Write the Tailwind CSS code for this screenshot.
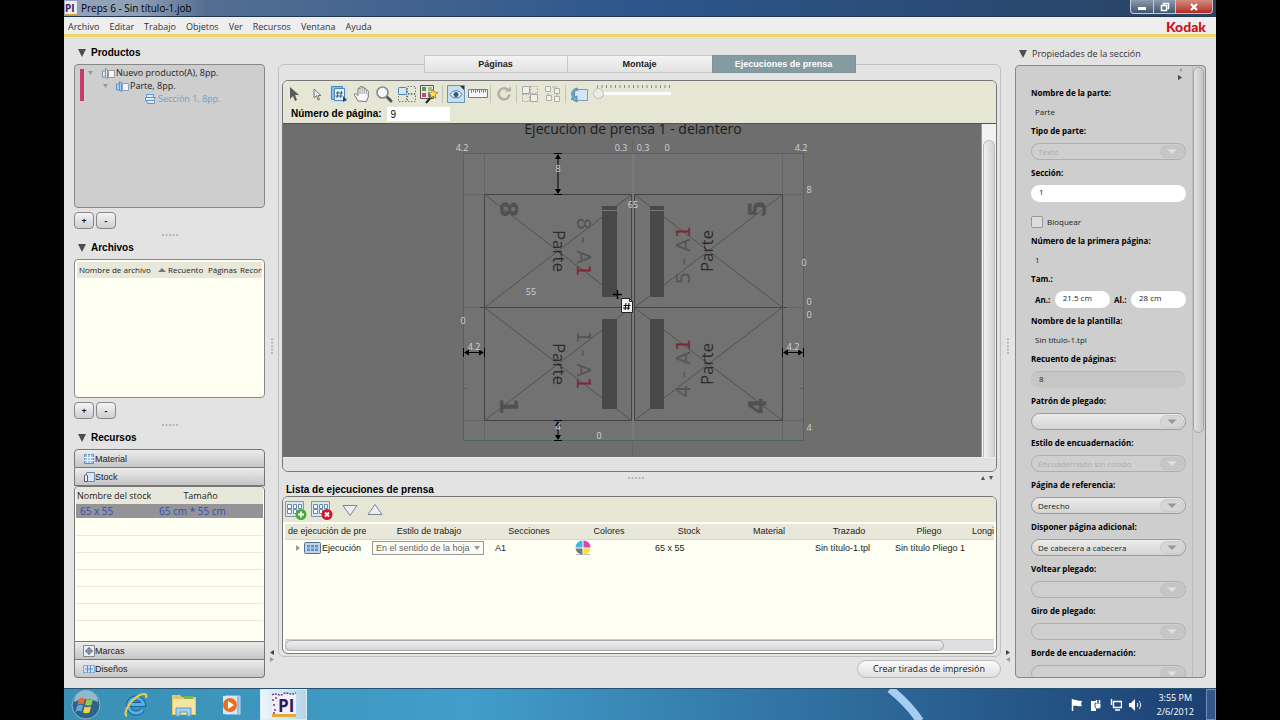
<!DOCTYPE html>
<html lang="es">
<head>
    <meta charset="UTF-8">
    <meta name="viewport" content="width=device-width, initial-scale=1.0">
    <title>Preps 6 - Sin título-1.job</title>
    <script src="https://cdn.jsdelivr.net/npm/@tailwindcss/browser@4"></script>
</head>
<body class="bg-black">
    <!-- Shared icons -->
    <svg class="hidden">
        <symbol id="dots" viewBox="0 0 16 2"><path d="M0 1h2M3.500 1h2M7 1h2M10.500 1h2M14 1h2" stroke="#aaa" stroke-width="1.500"/></symbol>
        <symbol id="dots-v" viewBox="0 0 2 16"><path d="M1 0v2M1 3.500v2M1 7v2M1 10.500v2M1 14v2" stroke="#aaa" stroke-width="1.500"/></symbol>
        <symbol id="down" viewBox="0 0 8 8"><path d="M0 0h8l-4 8z" fill="#4d4d4d"/></symbol>
        <symbol id="arrow-on" viewBox="0 0 24 13">
            <rect x=".5" y=".5" width="23" height="12" rx="6" fill="#d6d6d6" stroke="#c9c9c9"/>
            <path d="M7.500 4.500h9l-4.500 4.500z" fill="#929a9e"/>
        </symbol>
        <symbol id="arrow-off" viewBox="0 0 24 13">
            <rect x=".5" y=".5" width="23" height="12" rx="6" fill="#c6c6c6" stroke="#c2c2c2"/>
            <path d="M7.500 4.500h9l-4.500 4.500z" fill="#e2e2e2"/>
        </symbol>
    </svg>

    <div class="mx-auto flex h-screen w-[90%] flex-col overflow-hidden bg-[#e3e3e3] font-['Open_Sans','Noto_Sans',sans-serif] text-[9px] leading-3 text-[#222]">
        <!-- Title bar -->
        <header class="flex h-[17px] shrink-0 items-center justify-between border-b border-[#20354f] bg-linear-to-r from-[#5f7593] via-[#2d568c] to-[#284263] pr-[3px]">
            <div class="flex h-full items-center gap-1 bg-linear-to-r from-[#91a2b9] via-[#8fa0b8] to-transparent pr-4 pl-px text-[10px] text-black">
                <svg class="h-4 w-3" viewBox="0 0 12 16"><path d="M0 1h12v13H0z" fill="#eceaf4"/><path d="M0 14h12v1H0z" fill="#dca63a"/><text x="0" y="12" font-size="10" font-weight="bold" fill="#33225d">PI</text></svg>
                <h1>Preps 6 - Sin título-1.job</h1>
            </div>
            <div class="flex h-full items-start">
                <button aria-label="Minimizar" class="flex h-[14px] w-6 items-center justify-center rounded-bl-sm border border-t-0 border-[#c4ccd6] bg-linear-to-b from-[#8c9bad] to-[#44566d]">
                    <svg class="h-2 w-3" viewBox="0 0 12 8"><path d="M2 4h8v3H2z" fill="#fff"/></svg>
                </button>
                <button aria-label="Restaurar" class="flex h-[14px] w-[22px] items-center justify-center border border-t-0 border-l-0 border-[#c4ccd6] bg-linear-to-b from-[#8c9bad] to-[#44566d]">
                    <svg class="h-[10px] w-3" viewBox="0 0 12 10"><path d="M4.500 2.500v-1h5v5h-1M2.500 3.500h5v5h-5z" fill="none" stroke="#fff" stroke-width="1.500"/></svg>
                </button>
                <button aria-label="Cerrar" class="flex h-[14px] w-[37px] items-center justify-center rounded-br-sm border border-t-0 border-l-0 border-[#d8b8b8] bg-linear-to-b from-[#d08a80] to-[#b3261f]">
                    <svg class="h-2 w-[10px]" viewBox="0 0 10 8"><path d="M2 1l6 6M8 1L2 7" stroke="#fff" stroke-width="2.200"/></svg>
                </button>
            </div>
        </header>

        <!-- Menu bar -->
        <nav class="flex h-5 shrink-0 items-center justify-between border-b-[3px] border-[#ecd66c] bg-[#eeeeee] pt-[3px] pr-[10px] pl-1">
            <div class="flex gap-[10px] text-[#333]">
                <a href="#archivo">Archivo</a>
                <a href="#editar">Editar</a>
                <a href="#trabajo">Trabajo</a>
                <a href="#objetos">Objetos</a>
                <a href="#ver">Ver</a>
                <a href="#recursos">Recursos</a>
                <a href="#ventana">Ventana</a>
                <a href="#ayuda">Ayuda</a>
            </div>
            <span class="font-[Lato,sans-serif] text-[14px] font-black text-[#c8141c]">Kodak</span>
        </nav>

        <main class="flex min-h-0 flex-1 px-[10px] pt-[5px] pb-[10px]">
            <!-- Left column -->
            <aside class="flex w-[191px] shrink-0 flex-col">
                <h2 class="flex h-[22px] items-center gap-[5px] pl-1 font-['Liberation_Sans',sans-serif] text-[10px] font-bold text-black"><svg class="h-2 w-2"><use href="#down"/></svg>Productos</h2>
                <div class="flex h-36 items-start gap-1 rounded-sm border border-[#888] bg-[#cecece] px-[5px] pt-px">
                    <div class="mt-[3px] h-8 w-1 bg-[#c73a6b]"></div>
                    <ul class="leading-[13px]">
                        <li class="flex items-center gap-1">
                            <svg class="h-1 w-[5px]" viewBox="0 0 5 4"><path d="M0 0h5L2.500 4z" fill="#999"/></svg>
                            <span class="flex items-center gap-px"><svg class="ml-1 h-3 w-[14px]" viewBox="0 0 14 12"><path d="M1.500 4v6h3V4zM4.500 1.500l2 1v9l-2-1z" fill="#e2e8f0" stroke="#8190a5"/><path d="M7.500 3.500h6v7h-6z" fill="#f6f6f6" stroke="#999"/></svg>Nuevo producto(A), 8pp.</span>
                        </li>
                        <li class="flex items-center gap-1 pl-[15px]">
                            <svg class="h-1 w-[5px]" viewBox="0 0 5 4"><path d="M0 0h5L2.500 4z" fill="#999"/></svg>
                            <span class="flex items-center gap-px"><svg class="ml-[3px] h-3 w-[14px]" viewBox="0 0 14 12"><path d="M1.500 4v6h3V4zM4.500 1.500l2 1v9l-2-1z" fill="#a9cdee" stroke="#5f95c8"/><path d="M7.500 3.500h6v7h-6z" fill="#f6f6f6" stroke="#7fa5cb"/></svg>Parte, 8pp.</span>
                        </li>
                        <li class="flex items-center gap-[2px] pl-14 text-[#6d9fd2]">
                            <svg class="h-3 w-3" viewBox="0 0 12 12"><path d="M2.500 1.500h7v3h-7zM1.500 4.500h10l-2 3h-8zM2.500 7.500h8v3h-7z" fill="#dcecfa" stroke="#5f95c8"/></svg>Sección 1, 8pp.
                        </li>
                    </ul>
                </div>
                <div class="mt-1 flex gap-[2px] font-bold">
                    <button aria-label="Añadir producto" class="h-[17px] w-5 rounded-sm border border-[#888] bg-linear-to-b from-[#f4f4f4] to-[#cfcfcf]">+</button>
                    <button aria-label="Quitar producto" class="h-[17px] w-5 rounded-sm border border-[#888] bg-linear-to-b from-[#f4f4f4] to-[#cfcfcf]">-</button>
                </div>
                <div class="flex h-2 items-end justify-center pb-px"><svg class="h-[2px] w-4"><use href="#dots"/></svg></div>

                <h2 class="flex h-[22px] items-center gap-[5px] pl-1 font-['Liberation_Sans',sans-serif] text-[10px] font-bold text-black"><svg class="h-2 w-2"><use href="#down"/></svg>Archivos</h2>
                <div class="h-[139px] overflow-hidden rounded-sm border border-[#888] bg-[#fffff2] p-[2px]">
                    <table class="w-full table-fixed text-left text-[8px]">
                        <thead class="bg-[#e8e8da]">
                            <tr class="h-4 whitespace-nowrap">
                                <th class="w-[91px] pl-[2px] font-normal"><span class="flex items-center gap-[7px]">Nombre de archivo<svg class="h-1 w-2" viewBox="0 0 8 4"><path d="M0 4h8L4 0z" fill="#777"/></svg></span></th>
                                <th class="w-10 font-normal">Recuento</th>
                                <th class="w-8 font-normal">Páginas</th>
                                <th class="font-normal"><div class="overflow-hidden">Recorte</div></th>
                            </tr>
                        </thead>
                    </table>
                </div>
                <div class="mt-1 flex gap-[2px] font-bold">
                    <button aria-label="Añadir archivo" class="h-[17px] w-5 rounded-sm border border-[#888] bg-linear-to-b from-[#f4f4f4] to-[#cfcfcf]">+</button>
                    <button aria-label="Quitar archivo" class="h-[17px] w-5 rounded-sm border border-[#888] bg-linear-to-b from-[#f4f4f4] to-[#cfcfcf]">-</button>
                </div>
                <div class="flex h-2 items-end justify-center pb-px"><svg class="h-[2px] w-4"><use href="#dots"/></svg></div>

                <h2 class="flex h-[22px] items-center gap-[5px] pl-1 font-['Liberation_Sans',sans-serif] text-[10px] font-bold text-black"><svg class="h-2 w-2"><use href="#down"/></svg>Recursos</h2>
                <div class="flex min-h-0 flex-1 flex-col font-['Liberation_Sans',sans-serif]">
                    <button class="flex h-[19px] shrink-0 items-center rounded-t-sm border border-[#777] bg-linear-to-b from-[#ececec] to-[#c6c6c6] px-2 pt-px">
                        <svg class="h-3 w-3" viewBox="0 0 12 12"><path d="M1.500 1.500h9v9h-9z" fill="#9cc5ef" stroke="#5f90c4"/><path d="M1 4.500h10M1 7.500h10M4.500 1v9M7.500 1v9" stroke="#e9f3fd"/></svg>Material
                    </button>
                    <button class="flex h-[18px] shrink-0 items-center border-x border-b border-[#777] bg-linear-to-b from-[#ececec] to-[#c6c6c6] px-2">
                        <svg class="h-3 w-3" viewBox="0 0 12 12"><path d="M3.500 1.500h8v9h-8z" fill="#d9e7f6" stroke="#6f8bb0"/><path d="M1.500 4.500c0-1 3-1 3 0v6h-3z" fill="#f4f4f4" stroke="#556"/></svg>Stock
                    </button>
                    <div class="min-h-0 flex-1 overflow-hidden rounded-t-sm border border-[#777] bg-[#fffff2] px-px">
                        <table class="w-full font-['Open_Sans','Noto_Sans',sans-serif]">
                            <thead class="bg-[#e8e8da]">
                                <tr class="h-[17px]"><th class="w-[82px] pl-px text-left font-normal whitespace-nowrap">Nombre del stock</th><th class="pr-5 font-normal">Tamaño</th></tr>
                            </thead>
                            <tbody>
                                <tr class="h-[14px] bg-[#939398] text-[10px] font-medium text-[#2e50b0]"><td class="pl-1">65 x 55</td><td class="pl-px">65 cm * 55 cm</td></tr>
                                <tr class="h-[17px] border-b border-[#e8e8e4]"><td colspan="2"></td></tr>
                                <tr class="h-[17px] border-b border-[#e8e8e4]"><td colspan="2"></td></tr>
                                <tr class="h-[17px] border-b border-[#e8e8e4]"><td colspan="2"></td></tr>
                                <tr class="h-[17px] border-b border-[#e8e8e4]"><td colspan="2"></td></tr>
                                <tr class="h-[17px] border-b border-[#e8e8e4]"><td colspan="2"></td></tr>
                                <tr class="h-[17px] border-b border-[#e8e8e4]"><td colspan="2"></td></tr>
                            </tbody>
                        </table>
                    </div>
                    <button class="flex h-[18px] shrink-0 items-center border-x border-b border-[#777] bg-linear-to-b from-[#ececec] to-[#c6c6c6] px-2">
                        <svg class="h-3 w-3" viewBox="0 0 12 12"><path d="M.5.500h11v11H.5z" fill="#e8eef6" stroke="#888"/><path d="M6 2v8M2 6h8" stroke="#567"/><circle cx="6" cy="6" r="2.500" fill="none" stroke="#567"/></svg>Marcas
                    </button>
                    <button class="flex h-[18px] shrink-0 items-center rounded-b-sm border-x border-b border-[#777] bg-linear-to-b from-[#ececec] to-[#c6c6c6] px-2">
                        <svg class="h-3 w-3" viewBox="0 0 12 12"><path d="M.5 2.500h11v7H.5z" fill="#cfe2f6" stroke="#5f90c4" stroke-dasharray="2 1"/><path d="M2 6h8M4.500 3v6M7.500 3v6" stroke="#5f90c4"/></svg>Diseños
                    </button>
                </div>
            </aside>

            <!-- Left splitter -->
            <div class="flex w-[13px] shrink-0 flex-col items-center justify-between">
                <span></span>
                <svg class="h-4 w-[2px]"><use href="#dots-v"/></svg>
                <svg class="mb-4 h-3 w-1" viewBox="0 0 4 12"><path d="M4 0v5L0 2.500z" fill="#444"/><path d="M0 7v5l4-2.500z" fill="#999"/></svg>
            </div>

            <!-- Work area -->
            <section class="flex min-w-0 flex-1 flex-col pt-[13px]">
                <div class="z-10 -mb-[9px] flex justify-center font-['Liberation_Sans',sans-serif] text-[9px] font-bold" role="tablist">
                    <button role="tab" class="h-[18px] w-36 border border-[#c8c8c8] bg-linear-to-b from-[#f4f4f4] to-[#e2e2e2]">Páginas</button>
                    <button role="tab" class="h-[18px] w-36 border-y border-[#c8c8c8] bg-linear-to-b from-[#f4f4f4] to-[#e2e2e2]">Montaje</button>
                    <button role="tab" aria-selected="true" class="h-[18px] w-36 border border-[#7f959b] bg-[#849ba2] text-white">Ejecuciones de prensa</button>
                </div>
                <div class="flex min-h-0 flex-1 flex-col rounded-md border border-[#c0c0c0] px-[3px] pt-[15px] pb-[2px]">
                    <div class="flex min-h-0 flex-1 flex-col overflow-hidden rounded-md border border-[#777] bg-[#e2e2e2]">
                        <!-- Toolbar -->
                        <div class="h-[43px] shrink-0 border-b border-[#555] bg-[#e5e6d4]">
                            <div class="flex h-[26px] items-center">
                                <button aria-label="Seleccionar" class="flex w-[22px] justify-center"><svg class="h-4 w-4" viewBox="0 0 16 16"><path d="M4 1v12l3-3 2 5 2-1-2-5h4z" fill="#555a60"/></svg></button>
                                <button aria-label="Selección directa" class="flex w-[23px] justify-center"><svg class="h-4 w-4" viewBox="0 0 16 16"><path d="M5 3v9l2.500-2.500L9 14l1.500-.500L9 9.500h3z" fill="#eee" stroke="#777"/></svg></button>
                                <button aria-label="Numerar páginas" class="flex w-[22px] justify-center"><svg class="h-[18px] w-[18px]" viewBox="0 0 18 18"><path d="M0 0h18v18H0z" fill="#d3e3ed"/><path d="M1.500 1.500h11v13h-11z" fill="#8dbce0" stroke="#4e88b5"/><path d="M4.500 3.500h10v12h-10z" fill="#e7f2fa" stroke="#4e88b5"/><path d="M8 6l-1 7M11.500 6l-1 7M6 8h7M5.500 11h7" stroke="#2d5f88"/><path d="M13 11v6l4-2z" fill="#39424a"/></svg></button>
                                <button aria-label="Mano" class="flex w-[23px] justify-center"><svg class="h-[18px] w-[18px]" viewBox="0 0 18 18"><path d="M5 16L1.500 10c-.5-1.500 1-2 2-1l1.500 1.500V4c0-1.500 2-1.500 2 0V2.500c0-1.500 2.200-1.500 2.200 0V3c0-1.500 2.100-1.500 2.100 0v1.500c0-1.300 2-1.300 2 0V6c.5-1 2-.8 2 .500V12l-2 4.500z" fill="#f8f8f8" stroke="#777"/><path d="M7 4v5M9.200 3v6M11.300 4.500V9M13.300 6v3.500" stroke="#888" stroke-width=".8"/></svg></button>
                                <button aria-label="Zoom" class="flex w-[22px] justify-center"><svg class="h-[18px] w-[18px]" viewBox="0 0 18 18"><path d="M11 11l5 5" stroke="#555" stroke-width="3" stroke-linecap="round"/><circle cx="7.500" cy="7.500" r="5.500" fill="#f1f6fa" stroke="#8a8a8a" stroke-width="1.600"/></svg></button>
                                <button aria-label="Organizar páginas" class="flex w-[23px] justify-center"><svg class="h-[18px] w-5" viewBox="0 0 20 18"><path d="M10.500 1.500h8v7h-8zM1.500 9.500h8v7h-8zM10.500 9.500h8v7h-8z" fill="none" stroke="#777" stroke-dasharray="1.500 1.500"/><rect x="1.500" y="2.500" width="8" height="7" rx="1" fill="#d2e7f7" stroke="#4784b8"/></svg></button>
                                <button aria-label="Imposición automática" class="flex w-[22px] justify-center"><svg class="h-5 w-5" viewBox="0 0 20 20"><path d="M1.500 1.500h13v13h-13z" fill="#e9e4ee" stroke="#555"/><path d="M3 3h4v4H3z" fill="#55a04b"/><path d="M9 3h4v4H9z" fill="#9ac470"/><path d="M3 9h4v4H3z" fill="#cc4472"/><path d="M9 9h4v4H9z" fill="#7f69b5"/><path d="M7 19l6-7" stroke="#222" stroke-width="2"/><path d="M14 5l1.300 3.200 3.700.3-2.800 2.300.8 3.500-3-2-3 2 .8-3.500L9 8.500l3.700-.3z" fill="#ffe24a" stroke="#8a7513" stroke-width=".7"/></svg></button>
                                <span class="mx-[2px] h-[18px] w-px bg-[#c4c5b4]"></span>
                                <button aria-label="Vista previa" class="flex w-[22px] justify-center"><svg class="h-[18px] w-[18px]" viewBox="0 0 18 18"><path d="M.5.500h17v17H.5z" fill="#c6dff1" stroke="#6f92ad"/><path d="M13 1h4v4z" fill="#333"/><path d="M3 9.500c3-5 9-5 12 0-3 4.500-9 4.500-12 0z" fill="#eef6fc" stroke="#4a7599"/><circle cx="9" cy="9.500" r="2.500" fill="#2d5f88"/></svg></button>
                                <button aria-label="Medir" class="flex w-[22px] justify-center"><svg class="h-3 w-5" viewBox="0 0 20 12"><path d="M.5 1.500h19v8H.5z" fill="#f5f8fb" stroke="#6f7f92"/><path d="M3.500 2v3M5.500 2v2M7.500 2v3M9.500 2v2M11.500 2v3M13.500 2v2M15.500 2v3M17.500 2v2" stroke="#56657a" stroke-width=".8"/></svg></button>
                                <span class="mx-px h-[18px] w-px bg-[#c4c5b4]"></span>
                                <button aria-label="Girar" disabled class="flex w-[23px] justify-center"><svg class="h-4 w-4" viewBox="0 0 16 16"><path d="M11.500 3.500a5.500 5.500 0 1 0 2 5" fill="none" stroke="#b0b0a8" stroke-width="2.500"/><path d="M9 5.500h6v-5z" fill="#b0b0a8"/></svg></button>
                                <span class="mx-px h-[18px] w-px bg-[#c4c5b4]"></span>
                                <button aria-label="Agrupar" disabled class="flex w-[23px] justify-center"><svg class="h-[18px] w-[18px]" viewBox="0 0 18 18"><path d="M1.500 1.500h7v7h-7zM9.500 9.500h7v7h-7z" fill="#f0f0ea" stroke="#a5a59d"/><path d="M9.500 1.500h7v7h-7zM1.500 9.500h7v7h-7z" fill="none" stroke="#a5a59d" stroke-dasharray="1.500 1.500"/></svg></button>
                                <button aria-label="Desagrupar" disabled class="flex w-[23px] justify-center"><svg class="h-[18px] w-[18px]" viewBox="0 0 18 18"><path d="M1.500 1.500h5v5h-5zM10.500 3.500h5v5h-5zM2.500 10.500h5v5h-5zM10.500 11.500h5v5h-5z" fill="#f0f0ea" stroke="#aeaea6"/><path d="M8 2h5M4 8v2M13 9v2" stroke="#aeaea6"/></svg></button>
                                <span class="mx-px h-[18px] w-px bg-[#c4c5b4]"></span>
                                <button aria-label="Restablecer vista" class="flex w-[23px] justify-center"><svg class="h-[18px] w-5" viewBox="0 0 20 18"><path d="M5.500 4.500h13v11h-13z" fill="#d3e6f5" stroke="#7b9cba"/><path d="M8 3C3 4 1 9 4 13l-2 1 6 3V11l-2 1C4 9 5 6 9 5z" fill="#78a8d4" stroke="#3f72a2" stroke-width=".7"/></svg></button>
                                <div class="flex flex-col pb-1 pl-[3px]">
                                    <svg class="ml-1 h-[3px] w-[73px]" viewBox="0 0 73 3"><path d="M0 1.500h73" stroke="#8b8c80" stroke-width="3" stroke-dasharray="1 3.500"/></svg>
                                    <input type="range" value="0" aria-label="Escala de vista" class="h-[11px] w-[78px] appearance-none bg-transparent [&::-webkit-slider-runnable-track]:h-[3px] [&::-webkit-slider-runnable-track]:bg-white [&::-webkit-slider-thumb]:-mt-1 [&::-webkit-slider-thumb]:h-[11px] [&::-webkit-slider-thumb]:w-[11px] [&::-webkit-slider-thumb]:appearance-none [&::-webkit-slider-thumb]:rounded-full [&::-webkit-slider-thumb]:border [&::-webkit-slider-thumb]:border-[#bbb] [&::-webkit-slider-thumb]:bg-[#ecece4]">
                                </div>
                            </div>
                            <div class="flex h-[14px] items-center gap-[5px] pl-2 font-['Liberation_Sans',sans-serif] text-[10px] text-black">
                                <label for="numPagina" class="font-bold">Número de página:</label>
                                <input id="numPagina" type="text" value="9" class="h-[14px] w-[63px] bg-white pl-1">
                            </div>
                        </div>

                        <!-- Press sheet -->
                        <div class="flex min-h-0 flex-1">
                            <div class="flex min-w-0 flex-1 justify-center overflow-hidden bg-[#6e6e6e]">
                                <svg class="h-[333px] w-[699px] shrink-0" viewBox="283 124 699 333" font-size="9" fill="#d4d4d4" text-anchor="middle">
                                    <rect x="463.500" y="153.500" width="340" height="287" fill="#727272" stroke="#4b6560"/>
                                    <g fill="none" stroke="#646464">
                                        <path d="M484.500 154v286M782.500 154v286M464 194.500h339M464 420.500h339M464 307.500h339M632.500 140v317"/>
                                        <path d="M463 388.500h4M800 388.500h4" stroke="#4b6560"/>
                                    </g>
                                    <g fill="none" stroke="#444">
                                        <path d="M484.500 194.500h147v226h-147zM634.500 194.500h148v226h-148zM480 307.500h307"/>
                                        <path d="M484.500 194.500l147 113-147 113M631.500 194.500l-147 113 147 113M634.500 194.500l148 113-148 113M782.500 194.500l-148 113 148 113" stroke="#535353"/>
                                    </g>
                                    <path d="M633 154v286" stroke="#8a8a8a"/>
                                    <path d="M602 206h15v91h-15zM650 206h14v91h-14zM602 319h15v90h-15zM650 319h14v90h-14z" fill="#484848"/>
                                    <path d="M602 210.500h15M650 210.500h14" stroke="#777"/>
                                    <text x="633" y="134" font-size="14" fill="#1c1c1c">Ejecución de prensa 1 - delantero</text>

                                    <g class="font-['DejaVu_Sans',sans-serif]">
                                        <g font-size="24" font-weight="bold" fill="#515151">
                                            <text transform="translate(500 209) rotate(90)">8</text>
                                            <text transform="translate(766 209) rotate(-90)">5</text>
                                            <text transform="translate(500 406) rotate(90)">1</text>
                                            <text transform="translate(766 406) rotate(-90)">4</text>
                                        </g>
                                        <g font-size="20" fill="#555">
                                            <text transform="translate(577 247) rotate(90)">8 - A<tspan fill="#7c2936">1</tspan></text>
                                            <text transform="translate(690 255) rotate(-90)">5 - A<tspan fill="#7c2936">1</tspan></text>
                                            <text transform="translate(577 360) rotate(90)">1 - A<tspan fill="#7c2936">1</tspan></text>
                                            <text transform="translate(690 368) rotate(-90)">4 - A<tspan fill="#7c2936">1</tspan></text>
                                        </g>
                                    </g>
                                    <g font-size="17" fill="#2c2c2c">
                                        <text transform="translate(553 251) rotate(90)">Parte</text>
                                        <text transform="translate(713 251) rotate(-90)">Parte</text>
                                        <text transform="translate(553 364) rotate(90)">Parte</text>
                                        <text transform="translate(713 364) rotate(-90)">Parte</text>
                                    </g>

                                    <!-- Dimension arrows -->
                                    <path d="M554 153.500h8M554 194.500h8M558 155v38M554 420.500h8M554 440.500h8M558 422v17M463.500 348v9M484.500 348v9M465 352.500h18M782.500 348v9M803.500 348v9M784 352.500h18" stroke="#000"/>
                                    <path d="M558 154l3 5h-6zM558 194l3-5h-6zM558 421l3 5h-6zM558 440l3-5h-6zM464 352.500l5-3v6zM484 352.500l-5-3v6zM783 352.500l5-3v6zM803 352.500l-5-3v6z" fill="#000"/>

                                    <text x="462" y="151">4.2</text><text x="621" y="151">0.3</text><text x="643" y="151">0.3</text><text x="667" y="151">0</text><text x="801" y="151">4.2</text>
                                    <text x="558" y="172">8</text><text x="633" y="208">65</text><text x="531" y="295">55</text><text x="809" y="193">8</text><text x="804" y="266">0</text>
                                    <text x="809" y="305">0</text><text x="809" y="318">0</text><text x="463" y="324">0</text><text x="474" y="350">4.2</text><text x="793" y="350">4.2</text>
                                    <text x="558" y="430">4</text><text x="599" y="439">0</text><text x="809" y="431">4</text>

                                    <!-- Cursor -->
                                    <path d="M613 294.500h9M617.500 290v9" stroke="#000" stroke-width="1.500"/>
                                    <path d="M621.500 298.500h8l3 3v11h-11z" fill="#f4f4f4" stroke="#222"/><path d="M629.500 298.500v3h3" fill="none" stroke="#222"/>
                                    <path d="M626 303l-1 7M629 303l-1 7M623.500 305.500h7M623 308h7" stroke="#000"/>
                                </svg>
                            </div>
                            <div class="w-[15px] shrink-0 border-l border-[#999] bg-[#f2f2f2] pt-4"><div class="mx-px h-full rounded-t-full border border-b-0 border-[#bbb] bg-linear-to-r from-[#f0f0f0] to-[#d2d2d2]"></div></div>
                        </div>
                        <div class="h-[14px] shrink-0 border-t border-[#ececec] bg-[#e2e2e2]"></div>
                    </div>

                    <div class="flex h-3 shrink-0 items-center justify-between px-1">
                        <span class="w-1"></span>
                        <svg class="h-[2px] w-4"><use href="#dots"/></svg>
                        <svg class="h-1 w-3" viewBox="0 0 12 4"><path d="M0 4h4L2 0zM8 0h4l-2 4z" fill="#555"/></svg>
                    </div>

                    <!-- Press run list -->
                    <h2 class="h-3 shrink-0 pl-1 font-['Liberation_Sans',sans-serif] text-[10px] font-bold text-black">Lista de ejecuciones de prensa</h2>
                    <div class="flex h-[158px] shrink-0 flex-col overflow-hidden rounded-md border border-[#777] bg-[#fffff4] px-[2px] font-['Liberation_Sans',sans-serif] text-[9px]">
                        <div class="-mx-[2px] flex h-[25px] shrink-0 items-center gap-1 bg-[#e5e6d4] px-[2px] pt-px">
                            <button aria-label="Añadir ejecución"><svg class="h-[22px] w-[22px]" viewBox="0 0 22 22"><path d="M.5 2.500h18v15H.5z" fill="#dbe7f3" stroke="#7e95ae"/><path d="M2.500 5.500h4v4h-4zM2.500 10.500h4v4h-4zM8.500 5.500h3v4h-3zM8.500 10.500h3v4h-3zM13.500 5.500h3v4h-3z" fill="#fff" stroke="#6688ac"/><circle cx="16" cy="15.500" r="5.500" fill="#46ad35"/><path d="M16 12.500v6M13 15.500h6" stroke="#fff" stroke-width="1.800"/></svg></button>
                            <button aria-label="Eliminar ejecución"><svg class="h-[22px] w-[22px]" viewBox="0 0 22 22"><path d="M.5 2.500h18v15H.5z" fill="#dbe7f3" stroke="#7e95ae"/><path d="M2.500 5.500h4v4h-4zM2.500 10.500h4v4h-4zM8.500 5.500h3v4h-3zM8.500 10.500h3v4h-3zM13.500 5.500h3v4h-3z" fill="#fff" stroke="#6688ac"/><circle cx="16" cy="15.500" r="5.500" fill="#d01a2a"/><path d="M14 13.500l4 4M18 13.500l-4 4" stroke="#fff" stroke-width="1.800"/></svg></button>
                            <button aria-label="Bajar" class="ml-[5px]"><svg class="h-3 w-4" viewBox="0 0 16 12"><path d="M1 1.500h14l-7 10z" fill="#e9eef8" stroke="#7c8596"/></svg></button>
                            <button aria-label="Subir" class="ml-[5px]"><svg class="h-3 w-4" viewBox="0 0 16 12"><path d="M1 10.500h14l-7-10z" fill="#e9eef8" stroke="#7c8596"/></svg></button>
                        </div>
                        <div class="min-h-0 flex-1 overflow-hidden pt-[2px]">
                            <table class="w-full table-fixed text-[#222]">
                                <thead class="bg-[#e8e8da]">
                                    <tr class="h-[15px] border-b border-[#d6d6c8] whitespace-nowrap">
                                        <th class="w-[84px] px-[3px] text-left font-normal"><div class="overflow-hidden">de ejecución de prensa</div></th>
                                        <th class="w-[120px] font-normal">Estilo de trabajo</th>
                                        <th class="w-20 font-normal">Secciones</th>
                                        <th class="w-20 font-normal">Colores</th>
                                        <th class="w-20 font-normal">Stock</th>
                                        <th class="w-20 font-normal">Material</th>
                                        <th class="w-20 font-normal">Trazado</th>
                                        <th class="w-20 font-normal">Pliego</th>
                                        <th class="pl-[3px] text-left font-normal"><div class="overflow-hidden">Longitud</div></th>
                                    </tr>
                                </thead>
                                <tbody>
                                    <tr class="h-[18px] whitespace-nowrap">
                                        <td>
                                            <div class="flex items-center pl-[11px]">
                                                <svg class="h-[6px] w-1" viewBox="0 0 4 6"><path d="M0 0v6l4-3z" fill="#999"/></svg>
                                                <svg class="ml-1 h-3 w-[17px]" viewBox="0 0 17 12"><rect x=".5" y=".5" width="16" height="11" rx="1" fill="#c2d4ea" stroke="#58708e"/><path d="M3 3h3v2.500H3zM7 3h3v2.500H7zM11 3h3v2.500h-3zM3 6.500h3V9H3zM7 6.500h3V9H7zM11 6.500h3V9h-3z" fill="#5d92d2"/></svg>
                                                <span class="pl-px">Ejecución</span>
                                            </div>
                                        </td>
                                        <td class="px-[3px]">
                                            <div class="relative w-[112px]">
                                                <select aria-label="Estilo de trabajo" class="block h-[14px] w-full appearance-none border border-[#999] bg-[#fbfbf6] pl-[3px] text-[9px] leading-3 text-[#666]"><option>En el sentido de la hoja</option></select>
                                                <svg class="pointer-events-none absolute top-[5px] right-1 h-1 w-[6px]" viewBox="0 0 6 4"><path d="M0 0h6L3 4z" fill="#999"/></svg>
                                            </div>
                                        </td>
                                        <td class="pl-[6px]">A1</td>
                                        <td class="pl-[6px]"><svg class="h-4 w-4" viewBox="0 0 16 16"><path d="M1 14.500h14" stroke="#bbb"/><path d="M7.500 7.500V.5a7 7 0 0 0-7 7z" fill="#45b7e4"/><path d="M8.500 7.500h7a7 7 0 0 0-7-7z" fill="#e53fb0"/><path d="M8.500 8.500v6a7 7 0 0 0 7-6z" fill="#f2e427"/><path d="M7.500 8.500h-7a7 7 0 0 0 7 6z" fill="#727b80"/></svg></td>
                                        <td class="pl-[6px]">65 x 55</td>
                                        <td></td>
                                        <td class="pl-[6px]">Sin título-1.tpl</td>
                                        <td class="pl-[6px]">Sin título Pliego 1</td>
                                        <td></td>
                                    </tr>
                                </tbody>
                            </table>
                        </div>
                        <div class="mb-[2px] h-3 shrink-0 border-t border-[#ccc] bg-[#dedede]">
                            <div class="h-full w-[93%] rounded-full border border-[#aaa] bg-linear-to-b from-[#efefef] to-[#d5d5d5]"></div>
                        </div>
                    </div>
                </div>
                <div class="flex justify-end pt-[3px]">
                    <button class="h-[18px] rounded-full border border-[#bbb] bg-linear-to-b from-[#fafafa] to-[#e0e0e0] px-[15px]">Crear tiradas de impresión</button>
                </div>
            </section>

            <!-- Right splitter -->
            <div class="flex w-[14px] shrink-0 flex-col items-center justify-between">
                <span></span>
                <svg class="h-4 w-[2px]"><use href="#dots-v"/></svg>
                <svg class="mb-4 h-3 w-1" viewBox="0 0 4 12"><path d="M0 0v5l4-2.500z" fill="#444"/><path d="M4 7v5L0 9.500z" fill="#999"/></svg>
            </div>

            <!-- Section properties -->
            <aside class="flex w-[191px] shrink-0 flex-col">
                <h2 class="flex h-[23px] items-center gap-[5px] pl-1 text-[#333]"><svg class="h-2 w-2"><use href="#down"/></svg>Propiedades de la sección</h2>
                <div class="flex min-h-0 flex-1 overflow-hidden rounded-sm border border-[#888] bg-[#cecece] text-[8px]">
                    <div class="flex min-w-0 flex-1 flex-col pl-[15px]">
                        <svg class="mt-[2px] mr-[10px] h-3 w-1 shrink-0 self-end" viewBox="0 0 4 12"><path d="M4 0v4L1 2z" fill="#999"/><path d="M0 7v5l4-2.500z" fill="#444"/></svg>
                        <div class="flex w-[155px] shrink-0 flex-col">
                            <h3 class="mt-1 flex h-[18px] items-center font-bold text-black">Nombre de la parte:</h3>
                            <p class="flex h-5 items-center pl-1">Parte</p>
                            <label for="tipo" class="flex h-[21px] items-center pb-1 font-bold text-black">Tipo de parte:</label>
                            <div class="relative mb-1">
                                <select id="tipo" disabled class="block h-[17px] w-full appearance-none rounded-full border border-[#adadad] bg-[#cfcfcf] px-[6px] text-[#adadad] opacity-100"><option>Texto</option></select>
                                <svg class="pointer-events-none absolute top-[2px] right-[2px] h-[13px] w-6"><use href="#arrow-off"/></svg>
                            </div>
                            <label for="seccion" class="flex h-[21px] items-center pb-1 font-bold text-black">Sección:</label>
                            <input id="seccion" type="text" value="1" class="mb-1 h-[17px] w-full rounded-full bg-white px-2 pb-1">
                            <label class="mt-[6px] flex h-5 items-center gap-1">
                                <input type="checkbox" class="h-3 w-3 appearance-none rounded-xs border border-[#999] bg-[#dcdcdc]">Bloquear
                            </label>
                            <h3 class="flex h-[18px] items-center font-bold text-black">Número de la primera página:</h3>
                            <p class="flex h-5 items-center pl-1">1</p>
                            <h3 class="flex h-[18px] items-center font-bold text-black">Tam.:</h3>
                            <div class="mt-[3px] mb-1 flex items-center justify-between pl-1">
                                <label for="ancho" class="font-bold text-black">An.:</label>
                                <input id="ancho" type="text" value="21.5 cm" class="h-[17px] w-[55px] rounded-full bg-white px-2 pb-1">
                                <label for="alto" class="font-bold text-black">Al.:</label>
                                <input id="alto" type="text" value="28 cm" class="h-[17px] w-[55px] rounded-full bg-white px-2 pb-1">
                            </div>
                            <h3 class="flex h-[18px] items-center font-bold text-black">Nombre de la plantilla:</h3>
                            <p class="flex h-5 items-center pl-1">Sin título-1.tpl</p>
                            <label for="recuento" class="flex h-[21px] items-center pb-1 font-bold text-black">Recuento de páginas:</label>
                            <input id="recuento" type="text" value="8" readonly class="mb-1 h-[17px] w-full rounded-full border-t border-[#b8b8b8] bg-[#c6c6c6] px-2 pb-1">
                            <label for="patron" class="flex h-[21px] items-center pb-1 font-bold text-black">Patrón de plegado:</label>
                            <div class="relative mb-1">
                                <select id="patron" class="block h-[17px] w-full appearance-none rounded-full border border-[#9a9a9a] bg-linear-to-b from-[#ececec] to-[#d4d4d4] px-[6px]"><option></option></select>
                                <svg class="pointer-events-none absolute top-[2px] right-[2px] h-[13px] w-6"><use href="#arrow-on"/></svg>
                            </div>
                            <label for="estilo" class="flex h-[21px] items-center pb-1 font-bold text-black">Estilo de encuadernación:</label>
                            <div class="relative mb-1">
                                <select id="estilo" disabled class="block h-[17px] w-full appearance-none rounded-full border border-[#adadad] bg-[#cfcfcf] px-[6px] text-[#adadad] opacity-100"><option>Encuadernado sin cosido</option></select>
                                <svg class="pointer-events-none absolute top-[2px] right-[2px] h-[13px] w-6"><use href="#arrow-off"/></svg>
                            </div>
                            <label for="referencia" class="flex h-[21px] items-center pb-1 font-bold text-black">Página de referencia:</label>
                            <div class="relative mb-1">
                                <select id="referencia" class="block h-[17px] w-full appearance-none rounded-full border border-[#9a9a9a] bg-linear-to-b from-[#ececec] to-[#d4d4d4] px-[6px]"><option>Derecho</option></select>
                                <svg class="pointer-events-none absolute top-[2px] right-[2px] h-[13px] w-6"><use href="#arrow-on"/></svg>
                            </div>
                            <label for="disponer" class="flex h-[21px] items-center pb-1 font-bold text-black">Disponer página adicional:</label>
                            <div class="relative mb-1">
                                <select id="disponer" class="block h-[17px] w-full appearance-none rounded-full border border-[#9a9a9a] bg-linear-to-b from-[#ececec] to-[#d4d4d4] px-[6px]"><option>De cabecera a cabecera</option></select>
                                <svg class="pointer-events-none absolute top-[2px] right-[2px] h-[13px] w-6"><use href="#arrow-on"/></svg>
                            </div>
                            <label for="voltear" class="flex h-[21px] items-center pb-1 font-bold text-black">Voltear plegado:</label>
                            <div class="relative mb-1">
                                <select id="voltear" disabled class="block h-[17px] w-full appearance-none rounded-full border border-[#adadad] bg-[#cfcfcf] px-[6px] opacity-100"><option></option></select>
                                <svg class="pointer-events-none absolute top-[2px] right-[2px] h-[13px] w-6"><use href="#arrow-off"/></svg>
                            </div>
                            <label for="giro" class="flex h-[21px] items-center pb-1 font-bold text-black">Giro de plegado:</label>
                            <div class="relative mb-1">
                                <select id="giro" disabled class="block h-[17px] w-full appearance-none rounded-full border border-[#adadad] bg-[#cfcfcf] px-[6px] opacity-100"><option></option></select>
                                <svg class="pointer-events-none absolute top-[2px] right-[2px] h-[13px] w-6"><use href="#arrow-off"/></svg>
                            </div>
                            <label for="borde" class="flex h-[21px] items-center pb-1 font-bold text-black">Borde de encuadernación:</label>
                            <div class="relative mb-1">
                                <select id="borde" disabled class="block h-[17px] w-full appearance-none rounded-full border border-[#adadad] bg-[#cfcfcf] px-[6px] opacity-100"><option></option></select>
                                <svg class="pointer-events-none absolute top-[2px] right-[2px] h-[13px] w-6"><use href="#arrow-off"/></svg>
                            </div>
                        </div>
                    </div>
                    <div class="w-[13px] shrink-0 border-l border-[#bdbdbd] pt-px">
                        <div class="h-[60%] w-[11px] rounded-full border border-[#a5a5a5] bg-linear-to-r from-[#e2e2e2] to-[#c6c6c6]"></div>
                    </div>
                </div>
            </aside>
        </main>

        <!-- Taskbar -->
        <footer class="relative flex h-8 shrink-0 items-center justify-between overflow-hidden border-t border-[#27506f] bg-linear-to-r from-[#3a90b4] via-[#429dca] via-35% to-[#1d3f72] text-white">
            <svg class="absolute right-[280px] h-8 w-14" viewBox="0 0 56 32"><path d="M10 0c10 8 22 20 30 32" fill="none" stroke="#a6cdf2" stroke-width="8"/></svg>
            <div class="flex h-full items-center">
                <button aria-label="Inicio" class="ml-[7px]"><svg class="h-[30px] w-[30px]" viewBox="0 0 30 30"><circle cx="15" cy="15" r="14" fill="#2d6489" stroke="#8cb8d0"/><path d="M3 12a12 12 0 0 1 24 0c-8-4-16-4-24 0z" fill="#8fb9cd"/><path d="M8 9c2-1.500 4-1.500 6-.5l-1.500 6c-2-1-4-1-6 .5z" fill="#ea6a35"/><path d="M15.500 9c2 1 4 1 6.500 0l-1.500 6c-2 1-4.500 1-6.500 0z" fill="#94c949"/><path d="M6 16c2-1.500 4-1.500 6-.5l-1.500 6c-2-1-4-1-6 .5z" fill="#5ba9e6"/><path d="M13.500 16.500c2 1 4 1 6.500 0l-1.500 6c-2 1-4.500 1-6.500 0z" fill="#f8cf45"/></svg></button>
                <button aria-label="Internet Explorer" class="ml-[22px]"><svg class="h-[26px] w-[26px]" viewBox="0 0 26 26"><path d="M19.500 17.500a7.500 7.500 0 1 1 1-5H8" fill="none" stroke="#1c5fa0" stroke-width="5"/><path d="M19.500 17.500a7.500 7.500 0 1 1 1-5H8" fill="none" stroke="#4fb4ea" stroke-width="3"/><path d="M4 24C-1 22 7 8 17 3c5-2 7-1 6 3" fill="none" stroke="#f0cb45" stroke-width="2"/></svg></button>
                <button aria-label="Explorador" class="ml-[21px]"><svg class="h-[26px] w-7" viewBox="0 0 28 26"><path d="M2 3h8l2 2h14v18H2z" fill="#e7c567"/><path d="M3 7h22v15H3z" fill="#f7e6a2"/><path d="M14 4h9v3h-9z" fill="#7fb25a"/><path d="M6 24v-8h15v8h-4v-4h-7v4z" fill="#9fd0ee" stroke="#5d9cc6"/></svg></button>
                <button aria-label="Reproductor" class="ml-[22px]"><svg class="h-6 w-[22px]" viewBox="0 0 22 24"><path d="M5 3h15v18H5z" fill="#8fc0df" stroke="#bddcf0"/><path d="M3 3h14v18H3z" fill="#d7e6ef"/><circle cx="10" cy="12" r="7" fill="#e96f1f"/><path d="M8 8v8l6-4z" fill="#fff"/></svg></button>
                <button aria-label="Preps 6" class="ml-[18px] flex h-[31px] w-[47px] items-center justify-center border border-[#d8edf8] bg-linear-to-r from-[#eef5fa] to-[#b4d6e8]"><svg class="h-[26px] w-7" viewBox="0 0 28 26"><path d="M2 2c7-2 15 1 24-1v21H2z" fill="#f2eff8"/><path d="M2 22h24v3H2z" fill="#e0aa3c"/><path d="M2 3c4-3 7 2 11-1s7 2 13-1M3 7v2M6 5v2M4 12v2M5 17v2M3 21h2" fill="none" stroke="#5f4490" stroke-width="1.500" stroke-dasharray="2 1"/><text x="8" y="20" font-size="17" font-weight="bold" fill="#2c1a5b">PI</text></svg></button>
            </div>
            <div class="flex h-full items-center">
                <button aria-label="Centro de actividades"><svg class="h-3 w-[13px]" viewBox="0 0 13 12"><path d="M1.500 0v12" stroke="#fff" stroke-width="1.500"/><path d="M2 1c3-1 4 1 9 1l-1 3 1 2c-4 1-5-1-9 0z" fill="#fff"/></svg></button>
                <button aria-label="Energía" class="ml-[6px]"><svg class="h-3 w-3" viewBox="0 0 12 12"><path d="M1 2h5v10H1z" fill="#fff"/><path d="M5 4h6v3c0 2-1 3-3 3S5 9 5 7z" fill="#fff" stroke="#2b5285"/><path d="M6.500 1v3M9.500 1v3" stroke="#fff" stroke-width="1.500"/></svg></button>
                <button aria-label="Red" class="ml-2"><svg class="h-3 w-3" viewBox="0 0 12 12"><path d="M3.500 2.500h8v6h-8zM5 11h5M1.500 0v6" fill="none" stroke="#fff" stroke-width="1.400"/></svg></button>
                <button aria-label="Volumen" class="ml-[7px]"><svg class="h-3 w-3" viewBox="0 0 12 12"><path d="M0 4h2l4-4v12L2 8H0z" fill="#fff"/><path d="M8 4c1 1 1 3 0 4M10 2c2 2 2 6 0 8" fill="none" stroke="#fff"/></svg></button>
                <div class="ml-4 flex h-full flex-col justify-center text-center text-[9px] leading-[14px]"><span>3:55 PM</span><span>2/6/2012</span></div>
                <button aria-label="Mostrar escritorio" class="ml-3 h-full w-[10px] border border-[#6f8fb5] bg-[#33578a]"></button>
            </div>
        </footer>
    </div>
</body>
</html>
